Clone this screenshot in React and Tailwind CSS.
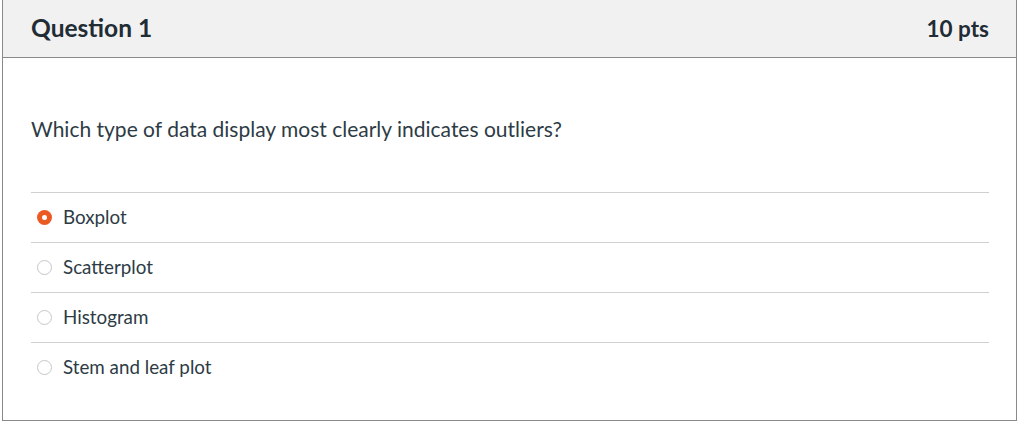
export default function App() {
  const options = ["Boxplot", "Scatterplot", "Histogram", "Stem and leaf plot"];
  return (
    <div className="w-[1024px] h-[425px] bg-white" style={{ fontFamily: "Lato, 'Open Sans', sans-serif" }}>
      <div className="ml-[2px] w-[1015px] h-[421px] border-x border-b border-[#8a8a8a] text-[#2d3b45]">
        <div className="h-[58px] bg-[#f1f1f1] border-b border-[#8a8a8a] flex items-center justify-between pl-[28px] pr-[27px]">
          <div className="text-[24.5px] font-bold text-[#222c35]">Question 1</div>
          <div className="text-[22.5px] font-bold text-[#222c35]">10 pts</div>
        </div>
        <div className="pl-[28px] pr-[27px]">
          <div className="pt-[57px] pb-[49px] text-[21px] text-[#2d3b45] leading-[28px]">
            Which type of data display most clearly indicates outliers?
          </div>
          <div>
            {options.map((o, i) => (
              <div key={o} className="h-[50px] border-t border-[#d0d0d0] flex items-center">
                <div className="w-[32px] flex items-center pl-[6px]">
                  {i === 0 ? (
                    <div className="w-[15px] h-[15px] rounded-full bg-[#ec5a24] flex items-center justify-center">
                      <div className="w-[5px] h-[5px] rounded-full bg-white" />
                    </div>
                  ) : (
                    <div className="w-[15px] h-[15px] rounded-full border border-[#c7c7c7] bg-white" />
                  )}
                </div>
                <div className="text-[18.8px] text-[#2d3b45]">{o}</div>
              </div>
            ))}
          </div>
        </div>
      </div>
    </div>
  );
}
